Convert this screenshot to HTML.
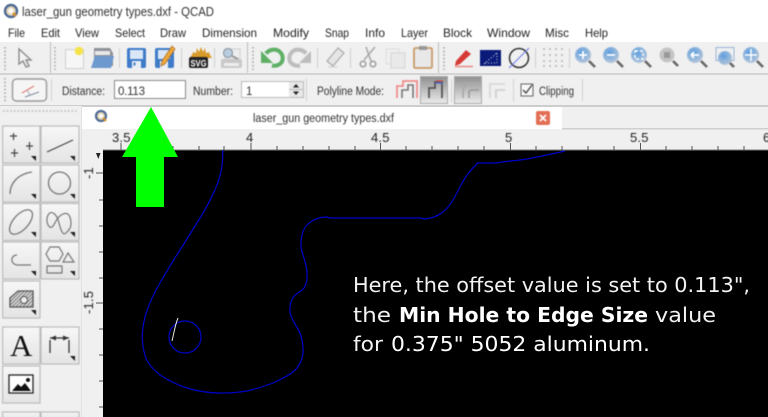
<!DOCTYPE html>
<html><head><meta charset="utf-8"><style>
html,body{margin:0;padding:0;background:#fff;width:768px;height:417px;overflow:hidden}
svg{display:block}
text{font-family:"Liberation Sans",sans-serif}
</style></head><body>
<svg width="768" height="417" viewBox="0 0 768 417" xmlns="http://www.w3.org/2000/svg">
<defs>
<linearGradient id="btn" x1="0" y1="0" x2="0" y2="1"><stop offset="0" stop-color="#f7f7f7"/><stop offset="1" stop-color="#e4e4e4"/></linearGradient>
<linearGradient id="sel" x1="0" y1="0" x2="0" y2="1"><stop offset="0" stop-color="#8f8f8f"/><stop offset="1" stop-color="#ececec"/></linearGradient>
<radialGradient id="zm" cx=".4" cy=".35" r=".7"><stop offset="0" stop-color="#5f9fe0"/><stop offset="1" stop-color="#b9c8d8"/></radialGradient>
<pattern id="hatch" width="2.500" height="2.500" patternUnits="userSpaceOnUse" patternTransform="rotate(45)"><rect width="2.500" height="2.500" fill="#ddd"/><rect width="1" height="2.500" fill="#777"/></pattern>
</defs>
<rect width="768" height="417" fill="#f0f0f0"/>
<rect width="768" height="42" fill="#fff"/>
<rect y="73" width="768" height="2" fill="#d4d4d4"/>
<rect y="105" width="768" height="2" fill="#cdcdcd"/>
<rect x="0" y="106" width="82" height="1" fill="#f0f0f0"/>

<g style="filter:blur(.4px)">
<!-- title icon -->
<circle cx="11" cy="11" r="6" fill="#e8d8b8" stroke="#4d6a94" stroke-width="2.400"/><circle cx="11" cy="11" r="2.500" fill="#fff"/><path d="M13 13l3 3" stroke="#d9912c" stroke-width="2.400"/>
<text x="22" y="16" font-size="12.5" fill="#333" textLength="192" lengthAdjust="spacingAndGlyphs">laser_gun geometry types.dxf - QCAD</text>

<g font-size="12" fill="#222">
<text x="8" y="37" textLength="17" lengthAdjust="spacingAndGlyphs">File</text><text x="41" y="37" textLength="19" lengthAdjust="spacingAndGlyphs">Edit</text><text x="75" y="37" textLength="24" lengthAdjust="spacingAndGlyphs">View</text><text x="115" y="37" textLength="30" lengthAdjust="spacingAndGlyphs">Select</text><text x="160" y="37" textLength="26" lengthAdjust="spacingAndGlyphs">Draw</text><text x="202" y="37" textLength="55" lengthAdjust="spacingAndGlyphs">Dimension</text><text x="273" y="37" textLength="36" lengthAdjust="spacingAndGlyphs">Modify</text><text x="325" y="37" textLength="24" lengthAdjust="spacingAndGlyphs">Snap</text><text x="365" y="37" textLength="20" lengthAdjust="spacingAndGlyphs">Info</text><text x="401" y="37" textLength="27" lengthAdjust="spacingAndGlyphs">Layer</text><text x="443" y="37" textLength="29" lengthAdjust="spacingAndGlyphs">Block</text><text x="487" y="37" textLength="43" lengthAdjust="spacingAndGlyphs">Window</text><text x="545" y="37" textLength="24" lengthAdjust="spacingAndGlyphs">Misc</text><text x="585" y="37" textLength="23" lengthAdjust="spacingAndGlyphs">Help</text>
</g>

<!-- toolbar 1 separators/handles -->
<g fill="#cfcfcf">
<rect x="50" y="42" width="1" height="31" fill="#bdbdbd"/><rect x="247" y="42" width="1" height="31" fill="#bdbdbd"/><rect x="438" y="42" width="1" height="31" fill="#bdbdbd"/>
<rect x="181" y="48" width="1" height="20"/><rect x="214" y="48" width="1" height="20"/><rect x="317" y="48" width="1" height="20"/><rect x="350" y="48" width="1" height="20"/><rect x="535" y="48" width="1" height="20"/><rect x="569" y="48" width="1" height="20"/><rect x="119" y="48" width="1" height="20"/>
</g>
<g stroke="#a8a8a8" stroke-width="1.6" stroke-dasharray="1.6 2">
<path d="M5 47V70M55 47V70M253 47V70M444 47V70M5 78V102"/>
<path d="M3 111H78" stroke="#bbb"/>
</g>

<!-- cursor -->
<path d="M19 49v15l4-3 3 6 3-1-3-6h5z" fill="#f3f3f3" stroke="#8b8b8b" stroke-width="1.400"/>
<!-- new -->
<rect x="65.500" y="49.500" width="18" height="19" fill="#f6f6f6" stroke="#d0d0d0"/><circle cx="79" cy="51" r="4.300" fill="#f6e24a"/>
<!-- open -->
<path d="M94 48h16l3 5v13H94z" fill="#8f9299"/><path d="M95 51h15v4H95z" fill="#e8e8e8"/><path d="M95 56h19l-3 12H91z" fill="#6d99cf"/>
<!-- save -->
<rect x="127" y="48" width="19" height="20" rx="2" fill="#3f7bc8"/><rect x="130" y="50" width="13" height="9" fill="#d9e6f5"/><rect x="132" y="61" width="9" height="7" fill="#e8eef5"/><rect x="133.500" y="62.500" width="2" height="3" fill="#3f7bc8"/>
<!-- save as -->
<rect x="155" y="48" width="19" height="20" rx="2" fill="#3f7bc8"/><rect x="158" y="50" width="12" height="9" fill="#d9e6f5"/><rect x="160" y="61" width="8" height="7" fill="#e8eef5"/><path d="M172 46l-10 15-1 5 4-2 10-15z" fill="#eda83a" stroke="#a8651f" stroke-width=".7"/>
<!-- SVG -->
<path d="M190 58l3-5-1-1 4 1 1-5 2 4 2-5 2 5 2-4 1 5 4-1-1 1 3 5z" fill="#d89a2a"/><rect x="189" y="57" width="19" height="11" rx="2" fill="#222"/><text x="190.500" y="66.500" font-size="9.500" font-weight="bold" fill="#fff" textLength="16" lengthAdjust="spacingAndGlyphs">SVG</text>
<!-- print preview -->
<rect x="221" y="59" width="21" height="9" rx="2" fill="#c9c9c9"/><rect x="224" y="63" width="15" height="3" fill="#eee"/><rect x="225" y="49" width="15" height="10" fill="#eee" stroke="#cfcfcf"/><circle cx="228" cy="53" r="4.500" fill="#b9cde0" stroke="#8f9aa5" stroke-width="1.200"/><path d="M232 56l6 3" stroke="#999" stroke-width="2"/>
<!-- undo -->
<path d="M266 53.500c3-4 10-5.500 14-1.500s3.500 10-1 12.500c-2 1.200-5 1.500-7 1" fill="none" stroke="#5fb066" stroke-width="4"/><path d="M261 51v12h12z" fill="#5fb066"/>
<!-- redo -->
<path d="M306 53.500c-3-4-10-5.500-14-1.500s-3.500 10 1 12.500c2 1.200 5 1.500 7 1" fill="none" stroke="#bdbdbd" stroke-width="4"/><path d="M311 51v12h-12z" fill="#bdbdbd"/>
<!-- eraser -->
<path d="M338 48l6 5-11 13-6-5z" fill="#e5e5e5" stroke="#aaa" stroke-width="1.200"/><path d="M328 67h9" stroke="#ccc"/>
<!-- scissors -->
<path d="M375 47l-11 13M366 47l5 14" stroke="#aaa" stroke-width="1.600" fill="none"/><circle cx="363" cy="64" r="2.800" fill="none" stroke="#999" stroke-width="1.400"/><circle cx="373" cy="64" r="2.800" fill="none" stroke="#999" stroke-width="1.400"/>
<!-- copy -->
<rect x="386" y="49" width="13" height="15" fill="#eee" stroke="#ddd"/><rect x="391" y="53" width="14" height="15" fill="#e9e9e9" stroke="#d5d5d5"/>
<!-- paste -->
<rect x="414" y="48" width="18" height="20" rx="1.500" fill="#e8e8e8" stroke="#c89a68" stroke-width="1.800"/><rect x="419" y="46" width="8" height="4" fill="#999"/>
<!-- pen -->
<path d="M466 50l5 4-11 10-5 2 1-5z" fill="#d63a35"/><path d="M455 66.500h18" stroke="#e88a8a" stroke-width="1.400"/>
<!-- blue box -->
<rect x="480" y="50" width="21" height="16" fill="#0a1a78"/><path d="M484 64l13-11M497 53v10h-12" stroke="#dfe4f8" stroke-width="1" stroke-dasharray="1 2" fill="none"/>
<!-- circle -->
<circle cx="519" cy="58" r="9.500" fill="none" stroke="#333" stroke-width="1.500"/><path d="M509 68l20-20" stroke="#6a7ae8"/>
<!-- dots -->
<g fill="#b5b5b5"><circle cx="544" cy="49" r="1"/><circle cx="550" cy="49" r="1"/><circle cx="556" cy="49" r="1"/><circle cx="562" cy="49" r="1"/><circle cx="544" cy="55" r="1"/><circle cx="550" cy="55" r="1"/><circle cx="556" cy="55" r="1"/><circle cx="562" cy="55" r="1"/><circle cx="544" cy="61" r="1"/><circle cx="550" cy="61" r="1"/><circle cx="556" cy="61" r="1"/><circle cx="562" cy="61" r="1"/><circle cx="544" cy="66" r="1"/><circle cx="550" cy="66" r="1"/><circle cx="556" cy="66" r="1"/><circle cx="562" cy="66" r="1"/></g>
<!-- zooms -->
<g stroke="#666" stroke-width="2.600"><path d="M589 61l6 6M617 61l6 6M645 61l6 6M673 61l5 5M701 61l6 6M729 62l5 5M757 61l6 6" /></g>
<g fill="url(#zm)"><circle cx="583" cy="55" r="8"/><circle cx="611" cy="55" r="8"/><circle cx="639" cy="55" r="8"/><circle cx="667" cy="55" r="7.500" fill="#c4c4c4"/><circle cx="695" cy="55" r="8"/><circle cx="725" cy="58" r="7"/><circle cx="751" cy="55" r="8"/></g>
<path d="M579 55h8M583 51v8M607 55h8M691 55h8M691 55l3-3M691 55l3 3" stroke="#fff" stroke-width="1.800" fill="none"/>
<rect x="635" y="51" width="8" height="8" fill="none" stroke="#fff" stroke-width="1.400" stroke-dasharray="3 2"/><rect x="664" y="52" width="6" height="6" fill="#999"/>
<rect x="716" y="47.500" width="18" height="13" fill="none" stroke="#9bb4d8"/>
<path d="M751 49v12M745 55h12" stroke="#fff" stroke-width="1.500"/>

<!-- toolbar 2 -->
<rect x="12.500" y="79" width="34" height="22" rx="4" fill="#f5f5f5" stroke="#999" stroke-width="1.400"/>
<path d="M22 93l12-7" stroke="#e15a5a" stroke-width="1"/><path d="M27 90l3 5" stroke="#aaa"/><path d="M25 97l14-5" stroke="#7f8ca0" stroke-width="1"/>
<rect x="51" y="79" width="1" height="22" fill="#d2d2d2"/>
<text x="62" y="95" font-size="11.500" fill="#333" textLength="43" lengthAdjust="spacingAndGlyphs">Distance:</text>
<rect x="114.500" y="80.500" width="71" height="18" fill="#fff" stroke="#8a8a8a"/>
<text x="118" y="95" font-size="11.500" fill="#333" textLength="27">0.113</text>
<text x="193" y="95" font-size="11.500" fill="#333" textLength="40" lengthAdjust="spacingAndGlyphs">Number:</text>
<rect x="241.500" y="81.500" width="62" height="16" fill="#fff" stroke="#bbb"/>
<rect x="289" y="82" width="14" height="15" fill="#e8e8e8"/>
<path d="M296 84l-3 3.500h6zM296 95l-3-3.500h6z" fill="#222"/><path d="M289 89.500h14" stroke="#bbb"/>
<text x="246" y="95" font-size="11.500" fill="#333">1</text>
<rect x="306" y="79" width="1" height="22" fill="#d2d2d2"/>
<text x="317" y="95" font-size="11.500" fill="#333" textLength="67" lengthAdjust="spacingAndGlyphs">Polyline Mode:</text>
<path d="M397 98V86h6v-5h14v17" fill="none" stroke="#f08d8d" stroke-width="1.800"/><path d="M402 98V90h6v-5h5v13" fill="none" stroke="#777" stroke-width="1.600"/>
<rect x="420.500" y="76.500" width="27" height="27" fill="url(#sel)" stroke="#aaa"/>
<path d="M429 98V88h6v-6h7v16" fill="none" stroke="#555" stroke-width="1.800"/><path d="M436 81h7" stroke="#d04a4a" stroke-width="1.200"/><path d="M435 83h8" stroke="#4a62d8" stroke-width="1.200"/>
<rect x="451" y="79" width="1" height="23" fill="#d2d2d2"/>
<rect x="454.500" y="76.500" width="27" height="27" fill="url(#sel)" stroke="#aaa"/>
<path d="M463 98V92c0-6 4-9 9-9h7" fill="none" stroke="#aaa" stroke-width="1.800"/><path d="M469 98V93q0-3 3-3h7" fill="none" stroke="#999" stroke-width="1.600"/>
<path d="M490 98V84h15" fill="none" stroke="#d8d8d8" stroke-width="1.800"/><path d="M496 98V90h9" fill="none" stroke="#ccc" stroke-width="1.600"/>
<rect x="513" y="79" width="1" height="23" fill="#d2d2d2"/>
<rect x="521" y="84" width="12" height="12" fill="#f8f8f8" stroke="#666"/><path d="M523 90l3 3 6-8" fill="none" stroke="#444" stroke-width="1.300"/>
<text x="539" y="95" font-size="11.500" fill="#333" textLength="35" lengthAdjust="spacingAndGlyphs">Clipping</text>
<rect x="582" y="79" width="1" height="22" fill="#d2d2d2"/>
</g>

<!-- tab area -->
<rect x="82" y="107" width="480" height="22" fill="#fff"/>
<rect x="562" y="128" width="206" height="1.500" fill="#cfcfcf"/>
<rect x="81" y="107" width="1" height="310" fill="#e2e2e2"/>
<g style="filter:blur(.4px)">
<circle cx="101" cy="116" r="5" fill="#e8d8b8" stroke="#4d6a94" stroke-width="2.200"/><circle cx="101" cy="116" r="2" fill="#fff"/><path d="M103 118l3 3" stroke="#d9912c" stroke-width="2.200"/>
<text x="253" y="122" font-size="11.500" fill="#333" textLength="141" lengthAdjust="spacingAndGlyphs">laser_gun geometry types.dxf</text>
<rect x="536" y="111" width="14" height="14" rx="2" fill="#e26f55"/><path d="M540 115l6 6M546 115l-6 6" stroke="#fff" stroke-width="1.800"/>

<!-- left tools -->
<g fill="url(#btn)" stroke="#bcbcbc" stroke-width="1.200">
<rect x="2.600" y="126" width="37.400" height="37"/><rect x="41" y="126" width="38" height="37"/>
<rect x="2.600" y="165" width="37.400" height="37"/><rect x="41" y="165" width="38" height="37"/>
<rect x="2.600" y="203.500" width="37.400" height="37"/><rect x="41" y="203.500" width="38" height="37"/>
<rect x="2.600" y="242" width="37.400" height="37"/><rect x="41" y="242" width="38" height="37"/>
<rect x="2.600" y="281" width="37.400" height="37"/>
<rect x="2.600" y="327" width="37.400" height="37"/><rect x="41" y="327" width="38" height="37"/>
<rect x="2.600" y="366" width="37.400" height="37"/>
<rect x="2.600" y="412" width="37.400" height="8"/><rect x="41" y="412" width="38" height="8"/>
</g>
<g fill="#222">
<path d="M36 161v-5h-5zM75 161v-5h-5zM36 199v-5h-5zM75 199v-5h-5zM36 237v-5h-5zM75 237v-5h-5zM36 276v-5h-5zM75 276v-5h-5zM36 315v-5h-5zM75 361v-5h-5z"/>
</g>
<g fill="none" stroke="#444" stroke-width="1.200">
<path d="M10 136h7M13.500 133v7M26 146h7M29.500 142v8M11 153h7M14.500 149v8"/>
<path d="M47 152l26-12"/>
<path d="M10 194c0-11 8-20 22-22" stroke="#777" stroke-width="1.300"/>
<circle cx="59.500" cy="183" r="11" stroke="#777" stroke-width="1.300"/>
<ellipse cx="21" cy="222" rx="7.500" ry="15" transform="rotate(42 21 222)" stroke="#777" stroke-width="1.300"/>
<path d="M48 215c4-6 9 0 11 8s4 13 7 10 5-5 5-9-1-13-8-10-8 11-11 13-7-5-4-12z" stroke="#777" stroke-width="1.200"/>
<path d="M31 265H18c-8 0-8-10-1-10" stroke="#777" stroke-width="1.200"/>
<path d="M46 254l4-7h9l4 7-4 7h-9zM63 262l5-9 6 9zM47 266h15v7H47z" stroke="#777" stroke-width="1.200"/>
<path d="M10 307v-9l8-7h15v16z" fill="url(#hatch)" stroke="#555" stroke-width="1.300"/>
</g>
<circle cx="24" cy="300" r="3.500" fill="#eee" stroke="#555"/>
<text x="10" y="356" font-size="31" fill="#111" style="font-family:'Liberation Serif',serif">A</text>
<path d="M50 340v13M69 340v13M50 338h19" fill="none" stroke="#333" stroke-width="1.300"/><path d="M50 338l6-2.500v5zM69 338l-6-2.500v5z" fill="#333"/>
<rect x="9" y="375" width="24" height="18" fill="#fff" stroke="#222" stroke-width="1.300"/><path d="M12 391l6-7 3 3 4-4 6 8z" fill="#111"/><circle cx="28" cy="380" r="2" fill="#111"/>

<!-- rulers -->
<g font-size="13" fill="#222" letter-spacing=".2">
<text x="112" y="142">3.5</text><text x="246" y="142">4</text><text x="371" y="142">4.5</text><text x="505" y="142">5</text><text x="630" y="142">5.5</text>
<text x="763" y="142">6</text>
<text transform="translate(93,179) rotate(-90)">-1</text>
<text transform="translate(93,314) rotate(-90)">-1.5</text>
</g>
</g>
<rect x="103" y="150" width="665" height="267" fill="#000"/>
<path d="M96 153h4.500l-2.200 6z" fill="#222"/>
<rect x="103" y="149.500" width="665" height="1" fill="#7a7a7a"/>
<path stroke="#555" stroke-width="1" d="M121 143v7M251 143v7M380.500 143v7M510.500 143v7M640.500 143v7M147 146v4M173 146v4M199 146v4M224 146v4M277 146v4M303 146v4M329 146v4M355 146v4M406 146v4M432 146v4M458 146v4M484 146v4M536 146v4M562 146v4M588 146v4M614 146v4M666 146v4M692 146v4M718 146v4M744 146v4M96 173h7M96 303h7M99 200h4M99 226h4M99 252h4M99 278h4M99 329h4M99 355h4M99 381h4M99 407h4"/>

<!-- drawing -->
<path fill="none" stroke="#0000c8" stroke-width="1.200" d="M222.700 150C223 165 221 176 215 190C210 201 205 210 200 218C193 229 187 239 180 250C173 261 166 272 160 283C153 295 148 306 145 317C143 325 142 333 142.300 340C143 348 144 354 146.700 360C150 366 155 371 160 375C168 380 177 385 187 388C197 391 209 393 220 393C230 393.300 238 392.500 247 391C256 389 265 386 273 383C281 379 288 376 293 372C299 367 302 360 303 353C303.500 346 302 339 300 333C297 327 294 323 292 318C290 314 289.500 311 290 307C290.500 302 292 298 295 295C298 292.500 302 291 304 288C306.500 284 307.500 278 307 272C306.500 266 305 261 303 255C301.500 251 300.700 246 301 242C301.500 235 303 229 307 225C312 220 319 217 327 217L330 218H421L424 219C431 218.500 438 216 443 212C447 209 450 205 453 200C456 195 459 189 462 183C466 176 471 169 477 164L477 163H495L510 161C519 160.500 528 159 537 157C547 155 556 153 565 151"/>
<circle cx="185" cy="337" r="16" fill="none" stroke="#0000c8" stroke-width="1.200"/>
<path d="M178 318C175 325 174 333 172 341" fill="none" stroke="#e8e8e8" stroke-width="1"/>

<!-- arrow -->
<path d="M151 107L178 157H164V207H136V157H122Z" fill="#00ff00"/>

<!-- annotation -->
<g fill="#f2f2f2" style="filter:blur(.25px)">
<text x="353" y="292" font-size="20" textLength="397" lengthAdjust="spacingAndGlyphs" style="font-family:'DejaVu Sans',sans-serif">Here, the offset value is set to 0.113",</text>
<text x="353" y="322" font-size="20" textLength="38" lengthAdjust="spacingAndGlyphs" style="font-family:'DejaVu Sans',sans-serif">the</text>
<text x="399" y="322" font-size="20" font-weight="bold" fill="#fff" textLength="249" lengthAdjust="spacingAndGlyphs" style="font-family:'DejaVu Sans',sans-serif">Min Hole to Edge Size</text>
<text x="655" y="322" font-size="20" textLength="61" lengthAdjust="spacingAndGlyphs" style="font-family:'DejaVu Sans',sans-serif">value</text>
<text x="353" y="351" font-size="20" textLength="30" lengthAdjust="spacingAndGlyphs" style="font-family:'DejaVu Sans',sans-serif">for</text>
<text x="391" y="351" font-size="20" fill="#fff" textLength="259" lengthAdjust="spacingAndGlyphs" style="font-family:'DejaVu Sans',sans-serif">0.375" 5052 aluminum.</text>
</g>
</svg>
</body></html>
